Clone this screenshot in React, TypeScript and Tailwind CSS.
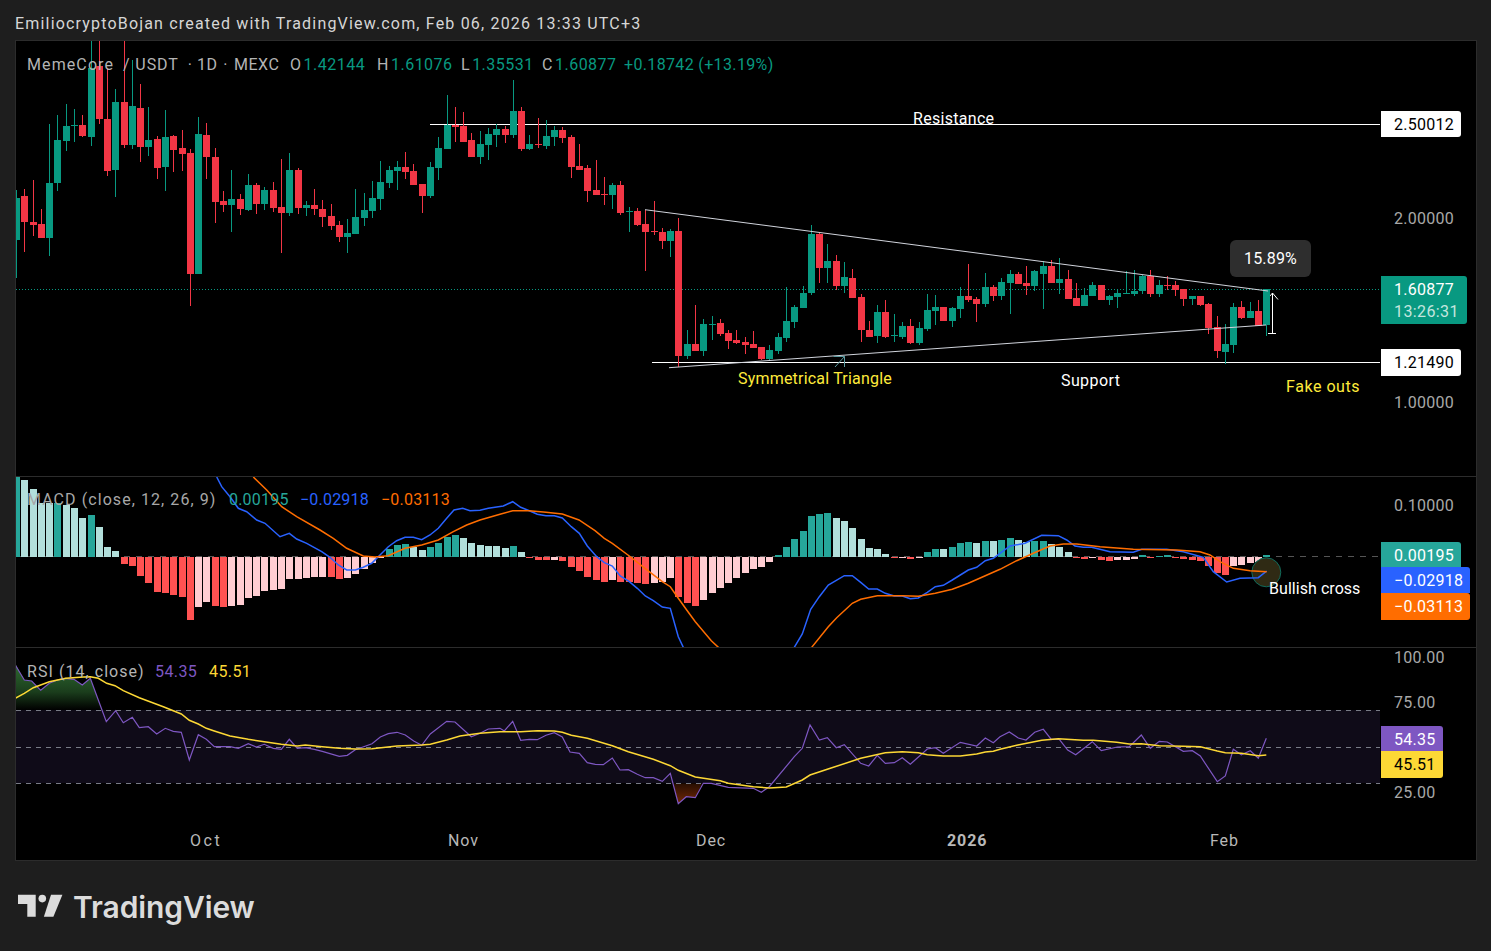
const C: number[][] = [
[1,190,198,240,278],[0,189,196,222,252],[0,180,222,225,236],[0,209,224,238,238],[1,124,183,238,256],[1,115,140,183,191],[1,104,126,141,151],[1,109,125,126,142],[0,115,125,136,137],[1,41,68,137,146],
[0,41,66,119,124],[0,68,119,171,176],[1,89,102,170,197],[0,41,102,145,148],[1,60,106,145,149],[0,84,108,147,162],[1,107,140,147,156],[0,136,139,168,179],[1,110,137,167,191],[0,135,136,150,172],
[0,130,148,154,171],[0,149,153,274,306],[1,117,134,274,274],[0,123,135,157,179],[0,148,157,202,223],[0,191,201,205,212],[1,170,199,205,232],[0,194,199,209,215],[1,174,185,210,211],[0,183,185,204,214],
[1,187,190,204,210],[0,182,190,208,212],[0,159,207,213,253],[1,153,170,213,216],[0,168,170,208,214],[1,201,205,208,216],[0,189,205,209,215],[0,200,209,217,227],[0,204,216,226,230],[0,221,225,237,242],
[1,219,233,237,253],[1,189,217,234,234],[1,193,210,218,226],[1,181,198,211,218],[1,161,182,199,210],[1,166,170,183,188],[1,161,167,171,190],[0,152,167,172,179],[0,164,171,185,185],[0,184,184,196,213],
[1,162,167,196,198],[1,137,148,168,180],[1,95,125,149,149],[0,107,125,127,142],[0,112,126,142,142],[0,133,140,157,157],[1,131,144,157,164],[1,128,134,145,160],[1,124,129,135,147],[0,126,129,135,143],
[1,80,111,135,138],[0,107,111,149,151],[1,135,144,149,150],[0,118,144,145,148],[1,120,136,146,149],[1,126,130,137,146],[0,127,130,138,143],[0,135,137,167,178],[0,144,166,170,170],[0,165,168,191,202],
[0,160,190,195,195],[0,177,194,195,205],[1,183,185,195,209],[0,181,185,213,215],[1,207,211,212,232],[0,208,211,225,226],[0,210,224,232,271],[0,201,231,232,235],[0,228,232,241,249],[1,229,231,241,257],
[0,218,231,356,367],[1,330,344,356,359],[0,305,344,351,351],[1,319,324,351,356],[1,316,324,325,340],[0,319,323,334,336],[0,330,333,341,349],[0,330,340,343,344],[0,337,342,345,354],[0,331,344,348,348],
[0,347,347,359,360],[1,345,350,359,360],[1,333,337,351,354],[1,287,321,338,342],[1,305,307,322,328],[1,286,293,308,308],[1,225,234,293,295],[0,233,234,268,283],[1,244,261,268,283],[0,255,261,286,290],
[1,262,277,286,293],[0,269,278,298,298],[0,294,297,330,342],[0,321,330,337,337],[1,305,312,336,343],[0,300,312,337,338],[1,314,335,336,342],[1,322,326,337,339],[0,319,326,343,344],[1,322,328,343,345],
[1,294,310,329,331],[1,295,307,311,325],[0,307,307,321,321],[1,307,308,321,327],[1,287,296,309,318],[0,264,296,300,302],[0,297,299,304,322],[1,273,287,304,307],[0,285,287,296,301],[1,278,282,296,300],
[1,270,274,283,314],[0,272,274,284,284],[0,266,283,286,295],[1,270,271,286,291],[1,261,266,274,309],[0,260,266,283,283],[1,258,279,283,294],[0,270,279,299,299],[0,283,298,306,306],[1,288,295,306,306],
[1,282,285,296,296],[0,285,285,300,300],[1,295,296,300,305],[1,290,293,297,308],[1,271,293,294,294],[1,270,291,294,296],[1,275,276,291,294],[0,270,276,294,297],[1,280,285,294,297],[0,276,285,286,290],
[0,281,285,290,296],[0,289,289,299,306],[1,296,296,299,305],[0,296,296,305,306],[0,303,304,328,334],[0,316,327,351,358],[1,324,344,352,364],[1,303,307,345,353],[0,301,307,318,319],[1,302,311,318,318],
[0,300,311,326,326],[1,289,289,325,336],
];
const H: [number, number][] = [
[0,21],[1,30],[1,57],[1,100],[1,100],[0,100],[1,105],[1,114],[1,144],[0,135],[1,171],[1,231],[1,243],[2,282],[2,288],[2,318],[2,339],[2,366],[2,369],[2,375],
[2,381],[2,450],[3,411],[3,396],[2,408],[2,411],[3,408],[3,405],[3,384],[3,378],[3,363],[3,360],[3,357],[3,327],[3,327],[3,324],[3,321],[3,321],[2,321],[2,327],
[3,324],[3,312],[3,297],[3,279],[3,264],[0,237],[0,225],[0,222],[1,231],[1,240],[0,231],[0,219],[0,201],[0,195],[1,204],[1,219],[1,225],[1,228],[1,228],[1,234],
[0,228],[1,246],[2,261],[2,270],[2,270],[3,270],[2,273],[2,291],[2,303],[2,321],[2,330],[2,336],[3,330],[2,336],[2,336],[2,339],[2,342],[3,339],[3,336],[3,324],
[2,381],[2,399],[2,408],[3,390],[3,369],[3,354],[3,339],[3,324],[3,309],[3,297],[3,291],[3,276],[0,255],[0,231],[0,207],[0,183],[0,138],[0,132],[0,129],[1,144],
[1,153],[1,174],[1,207],[1,234],[1,237],[1,252],[2,264],[3,261],[2,267],[3,264],[0,246],[0,237],[1,237],[0,231],[0,219],[0,216],[1,219],[0,213],[1,213],[0,210],
[0,204],[1,210],[1,216],[0,213],[0,213],[1,222],[1,231],[1,246],[2,264],[2,267],[3,264],[2,270],[2,273],[3,270],[3,270],[3,267],[0,255],[2,262],[0,257],[0,256],
[2,262],[2,267],[2,270],[2,273],[2,288],[2,309],[2,315],[3,288],[3,285],[3,279],[3,276],[0,255],
];
const HC = ["#26a69a", "#b2dfdb", "#ff5252", "#ffcdd2"];
const cx = (i: number) => Math.round(16 + 8.28 * i);
const conv = (ox: number, oy: number, p: number[]) => {
  const out: string[] = [];
  for (let i = 0; i < p.length; i += 2) out.push(`${(ox + p[i] / 3).toFixed(1)},${(oy + p[i + 1] / 3).toFixed(1)}`);
  return out;
};
const blue1 = [...conv(0,470,[650,21,665,50,690,80,715,115,740,125,770,150,795,160,840,200,868,190,890,207,920,220,965,245,990,262,1015,285,1040,300,1066,300,1090,292,1115,280,1140,255,1165,230,1190,212,1215,202,1240,202,1265,209,1290,195,1315,175,1340,145,1362,120,1388,115,1410,122,1440,121,1465,115]),
 ...conv(500,470,[10,108,38,95,62,112,88,122,112,133,138,137,163,137,187,144,214,170,238,190,262,228,290,260,313,278,337,288,361,318,388,335,412,355,436,378,460,392,487,411,511,415,535,500,550,532,560,560,873,560,883,532,907,492,932,418,958,380,985,345,1033,317,1057,317,1082,337,1106,357,1132,357,1156,370,1183,378,1207,378,1231,386,1255,384,1282,367,1306,350,1330,346,1357,330,1381,315,1405,300,1430,292,1456,272,1480,265]),
 ...conv(1000,470,[0,250,30,228,75,220,125,196,175,197,200,210,225,228,250,232,275,232,330,245,400,247,425,238,500,238,550,245,610,262,640,305,680,336,720,325,775,323,800,303])].join(" ");
const orange1 = [...conv(0,470,[760,21,800,60,845,110,890,140,960,180,1000,205,1040,235,1090,258,1125,261,1165,257,1215,235,1265,225,1315,210,1360,185,1400,165,1440,150]),
 ...conv(500,470,[0,133,38,122,88,122,138,127,187,132,237,150,285,182,313,205,337,220,388,258,436,296,487,335,511,350,535,385,560,420,586,455,634,512,655,532,670,560,925,560,935,532,985,470,1010,443,1057,400,1082,388,1132,377,1207,377,1255,379,1306,370,1357,358,1405,340,1456,317]),
 ...conv(1000,470,[0,298,50,272,100,250,150,228,190,222,230,222,300,230,400,238,530,240,600,245,630,255,660,275,700,295,750,302,800,305])].join(" ");
const purple1 = [...conv(0,650,[46,45,73,90,95,93,122,121,148,100,172,90,197,85,222,88,247,105,271,85,295,150,319,215,347,182,370,218,397,202,418,233,445,230,470,252,496,235,520,244,544,247,568,330,595,254,619,268,643,290,690,290,715,295,745,281,769,291,793,283,820,295,844,298,868,268,892,295,916,293,943,298,967,304,1018,319,1042,316,1066,299,1116,281,1141,261,1165,251,1191,247,1216,255,1241,273,1265,286,1291,252,1340,214,1365,216,1414,260,1440,250,1465,237]),
 ...conv(500,650,[0,235,13,243,38,214,62,271,88,268,112,269,138,256,163,248,187,261,210,306,238,310,262,338,286,343,310,344,337,324,360,360,385,359,412,373,436,383,460,383,487,394,511,370,535,461,559,440,586,443,610,400,634,400,685,412,760,415,784,427,808,410,883,320,907,295,930,225,958,270,982,263,1009,293,1033,284,1082,340,1106,348,1132,316,1156,340,1183,338,1207,323,1231,343,1282,297,1306,293,1330,310,1381,277,1430,288,1456,264,1480,278]),
 ...conv(1000,650,[0,260,28,246,55,264,78,270,104,247,130,238,154,268,178,268,203,300,227,314,277,275,304,302,352,291,388,290,424,255,451,295,478,274,502,276,550,304,577,302,601,318,652,395,676,378,700,298,724,314,751,302,775,325,799,265])].join(" ");
const yellow1 = [...conv(0,650,[46,145,73,130,100,113,148,95,197,85,250,81,271,80,295,85,320,100,345,107,370,122,418,143,490,170,544,192,568,211,595,222,619,235,643,243,690,258,745,268,793,275,844,283,892,288,916,285,967,290,1018,295,1066,297,1116,296,1191,288,1265,285,1291,283,1340,270,1380,258,1440,250]),
 ...conv(500,650,[0,245,62,245,112,242,163,243,187,247,214,256,262,265,337,287,385,305,460,328,511,347,535,361,586,381,661,392,685,400,760,410,808,414,859,411,907,390,930,375,982,358,1082,325,1156,308,1207,305,1255,308,1282,314,1330,318,1381,318,1430,312,1456,306,1480,304]),
 ...conv(1000,650,[0,298,50,286,125,271,175,266,250,271,280,271,350,277,388,282,424,281,478,287,550,289,601,290,652,303,676,308,724,310,775,317,799,315])].join(" ");
const greenFill = "16,665 24.3,680 31.7,681 40.7,690.3 49.3,683.3 57.3,680 65.7,678.3 74,679.3 82.3,685 90.3,678.3 98.3,700 102,710 16,710";
const brownFill = "673,783.5 678.3,803.7 686.3,796.7 695.3,797.7 702,783.5";

function PriceTag({ cls, children }: { cls: string; children: React.ReactNode }) {
  return <div className={"absolute left-px pl-[13px] text-[16px] leading-[28px] tracking-[0.25px] " + cls}>{children}</div>;
}

export default function App() {
  return (
    <div className="w-[1491px] h-[951px] overflow-hidden bg-[#1e1e1e] flex flex-col [font-family:'Roboto',sans-serif]">
      <div className="h-10 pl-[15px] pt-[14px] text-[16px] leading-5 tracking-[1.18px] text-[#d6d6d6] whitespace-nowrap">
        EmiliocryptoBojan created with TradingView.com, Feb 06, 2026 13:33 UTC+3
      </div>
      <div className="ml-[15px] w-[1462px] h-[821px] border border-[#2c2c2c] bg-black flex flex-col">
        {/* Price pane */}
        <div className="h-[435px] flex">
          <div className="relative w-[1364px] h-full">
            <svg viewBox="16 41 1364 435" width="1364" height="435" className="block" shapeRendering="crispEdges">
              <line x1="16" x2="1380" y1="289.5" y2="289.5" stroke="#089981" strokeDasharray="1 2" />
              <line x1="430" x2="1380" y1="124.5" y2="124.5" stroke="#ffffff" />
              <line x1="652" x2="1380" y1="362.5" y2="362.5" stroke="#ffffff" />
              <path d="M1272.5 293V333M1268 333.5H1276M1272.5 293L1278 299.5M1272.5 293L1267 299.5" stroke="#ffffff" strokeWidth="1" fill="none" shapeRendering="geometricPrecision" />
              {C.map((c, i) => {
                const col = c[0] ? "#089981" : "#f23645";
                const x = cx(i);
                return (
                  <g key={i} fill={col}>
                    <rect x={x} y={c[1]} width="1" height={c[4] - c[1]} />
                    <rect x={x - 3} y={c[2]} width="7" height={Math.max(1, c[3] - c[2])} />
                  </g>
                );
              })}
              <g shapeRendering="geometricPrecision" fill="none">
                <line x1="645" y1="209.7" x2="1268" y2="291" stroke="#d1d4dc" strokeWidth="1" />
                <line x1="669" y1="367.7" x2="1266" y2="325" stroke="#d1d4dc" strokeWidth="1" />
                <path d="M833.5 356.5H844.5V367M844.5 356.5L835 367" stroke="#5b9aa0" strokeWidth="1" />
              </g>
            </svg>
            <div className="absolute left-[11px] top-[14px] h-5 flex text-[16px] leading-5 tracking-[0.5px] text-[#b4b4b4] whitespace-nowrap">
              <span className="w-[96px] tracking-[1.1px]">MemeCore</span>
              <span className="w-[60px] tracking-[0.9px]">/ USDT</span>
              <span className="w-[14px] text-center">·</span>
              <span className="w-[20px]">1D</span>
              <span className="w-[17px] text-center">·</span>
              <span className="w-[56px]">MEXC</span>
              <span className="w-[87px]"><span className="mr-[2px]">O</span><span className="text-[#089981]">1.42144</span></span>
              <span className="w-[84px]"><span className="mr-[2px]">H</span><span className="text-[#089981]">1.61076</span></span>
              <span className="w-[81px]"><span className="mr-[2px]">L</span><span className="text-[#089981]">1.35531</span></span>
              <span className="w-[82px]"><span className="mr-[2px]">C</span><span className="text-[#089981]">1.60877</span></span>
              <span className="text-[#089981] tracking-[0.35px]">+0.18742 (+13.19%)</span>
            </div>
            <div className="absolute left-[897px] top-[68px] text-[16px] leading-5 tracking-[0.3px] text-white">Resistance</div>
            <div className="absolute left-[722px] top-[328px] text-[16px] leading-5 tracking-[0.2px] text-[#ffeb3b] whitespace-nowrap">Symmetrical Triangle</div>
            <div className="absolute left-[1045px] top-[330px] text-[16px] leading-5 tracking-[0.4px] text-white">Support</div>
            <div className="absolute left-[1270px] top-[336px] text-[16px] leading-5 tracking-[0.55px] text-[#ffeb3b] whitespace-nowrap">Fake outs</div>
            <div className="absolute left-[1214px] top-[199px] w-[81px] h-[37px] pt-px rounded-[6px] bg-[#2e2e2e] flex items-center justify-center text-[16px] tracking-[0.2px] text-white">15.89%</div>
          </div>
          <div className="relative w-[95px] h-full text-[#a8a8a8]">
            <div className="absolute left-[14px] top-[168px] text-[16px] leading-5 tracking-[0.25px]">2.00000</div>
            <div className="absolute left-[14px] top-[352px] text-[16px] leading-5 tracking-[0.25px]">1.00000</div>
            <PriceTag cls="top-[70px] w-[80px] h-[26px] bg-white text-black rounded-r-[3px]">2.50012</PriceTag>
            <div className="absolute left-px top-[235px] w-[86px] h-[48px] pl-[13px] pt-[3px] rounded-r-[3px] bg-[#089981] text-[16px] leading-[22px] tracking-[0.25px] text-white">
              <div>1.60877</div>
              <div className="text-[#c4e6df] tracking-[0.4px]">13:26:31</div>
            </div>
            <PriceTag cls="top-[308px] w-[80px] h-[27px] bg-white text-black rounded-r-[3px]">1.21490</PriceTag>
          </div>
        </div>
        <div className="h-px bg-[#2c2c2c]" />
        {/* MACD pane */}
        <div className="h-[170px] flex">
          <div className="relative w-[1364px] h-full">
            <svg viewBox="16 477 1364 170" width="1364" height="170" className="block">
              <line x1="16" x2="1380" y1="556.5" y2="556.5" stroke="#555" strokeDasharray="6 6" />
              {H.map(([k, z], i) => {
                const y = 470 + z / 3;
                const t = Math.round(Math.min(y, 556.5));
                const b = Math.round(Math.max(y, 556.5));
                return <rect key={i} x={cx(i) - 3} y={t} width="7" height={Math.max(1, b - t)} fill={HC[k]} shapeRendering="crispEdges" />;
              })}
              <circle cx="1266.3" cy="572.3" r="14.5" fill="#2f2a14" stroke="#0f6b5c" strokeWidth="1" />
              <polyline points={blue1} fill="none" stroke="#2962ff" strokeWidth="1.5" />
              <polyline points={orange1} fill="none" stroke="#ff6d00" strokeWidth="1.5" />
            </svg>
            <div className="absolute left-[11px] top-[13px] h-5 flex text-[16px] leading-5 tracking-[0.2px] text-[#a8a8a8] whitespace-nowrap">
              <span className="w-[202px] tracking-[1.07px]">MACD (close, 12, 26, 9)</span>
              <span className="w-[71px] text-[#26a69a]">0.00195</span>
              <span className="w-[81px] text-[#2962ff]">−0.02918</span>
              <span className="text-[#ff6d00]">−0.03113</span>
            </div>
            <div className="absolute left-[1253px] top-[102px] text-[16px] leading-5 tracking-[0.05px] text-white whitespace-nowrap">Bullish cross</div>
          </div>
          <div className="relative w-[95px] h-full text-[#a8a8a8]">
            <div className="absolute left-[14px] top-[19px] text-[16px] leading-5 tracking-[0.25px]">0.10000</div>
            <PriceTag cls="top-[65px] w-[80px] h-[25px] bg-[#26a69a] text-white rounded-tr-[3px]">0.00195</PriceTag>
            <PriceTag cls="top-[90px] w-[89px] h-[26px] bg-[#2962ff] text-white rounded-tr-[3px]">−0.02918</PriceTag>
            <PriceTag cls="top-[116px] w-[89px] h-[27px] bg-[#ff6d00] text-white rounded-r-[3px]">−0.03113</PriceTag>
          </div>
        </div>
        <div className="h-px bg-[#2c2c2c]" />
        {/* RSI pane */}
        <div className="h-[177px] flex">
          <div className="relative w-[1364px] h-full">
            <svg viewBox="16 648 1364 177" width="1364" height="177" className="block">
              <defs>
                <linearGradient id="gf" gradientUnits="userSpaceOnUse" x1="0" x2="0" y1="665" y2="710">
                  <stop offset="0" stopColor="#4caf50" stopOpacity="0.6" />
                  <stop offset="0.6" stopColor="#4caf50" stopOpacity="0.35" />
                  <stop offset="1" stopColor="#4caf50" stopOpacity="0" />
                </linearGradient>
                <linearGradient id="bf" gradientUnits="userSpaceOnUse" x1="0" x2="0" y1="783" y2="804">
                  <stop offset="0" stopColor="#ff5a0a" stopOpacity="0.15" />
                  <stop offset="1" stopColor="#ff5a0a" stopOpacity="0.45" />
                </linearGradient>
              </defs>
              <rect x="16" y="710" width="1364" height="73" fill="#0f0b18" shapeRendering="crispEdges" />
              <polygon points={greenFill} fill="url(#gf)" />
              <polygon points={brownFill} fill="url(#bf)" />
              <g stroke="#787b86" strokeDasharray="5 5" shapeRendering="crispEdges">
                <line x1="16" x2="1380" y1="710.5" y2="710.5" />
                <line x1="16" x2="1380" y1="747.5" y2="747.5" />
                <line x1="16" x2="1380" y1="783.5" y2="783.5" />
              </g>
              <polyline points={purple1} fill="none" stroke="#7e57c2" strokeWidth="1.2" />
              <polyline points={yellow1} fill="none" stroke="#fdd835" strokeWidth="1.5" />
            </svg>
            <div className="absolute left-[11px] top-[14px] h-5 flex text-[16px] leading-5 tracking-[0.4px] text-[#b4b4b4] whitespace-nowrap">
              <span className="w-[128px] tracking-[1.05px]">RSI (14, close)</span>
              <span className="w-[54px] text-[#7e57c2]">54.35</span>
              <span className="text-[#fdd835]">45.51</span>
            </div>
          </div>
          <div className="relative w-[95px] h-full text-[#a8a8a8]">
            <div className="absolute left-[14px] top-0 text-[16px] leading-5 tracking-[0.25px]">100.00</div>
            <div className="absolute left-[14px] top-[45px] text-[16px] leading-5 tracking-[0.25px]">75.00</div>
            <div className="absolute left-[14px] top-[135px] text-[16px] leading-5 tracking-[0.25px]">25.00</div>
            <PriceTag cls="top-[78px] w-[62px] h-[25px] bg-[#7e57c2] text-white rounded-tr-[3px]">54.35</PriceTag>
            <PriceTag cls="top-[103px] w-[62px] h-[27px] bg-[#fdd835] text-black rounded-br-[3px]">45.51</PriceTag>
          </div>
        </div>
        {/* Time axis */}
        <div className="relative h-[35px] text-[16px] leading-5 tracking-[0.9px] text-[#b8b8b8]">
          <span className="absolute left-[174px] top-[6px] tracking-[2.6px]">Oct</span>
          <span className="absolute left-[432px] top-[6px]">Nov</span>
          <span className="absolute left-[680px] top-[6px]">Dec</span>
          <span className="absolute left-[931px] top-[6px] font-bold">2026</span>
          <span className="absolute left-[1194px] top-[6px]">Feb</span>
        </div>
      </div>
      <div className="ml-[18px] mt-[31px] flex items-center h-[26px]">
        <svg width="45" height="23" viewBox="18 894 45 23" className="block">
          <path d="M18 894.7H35.7V916.7H27.3V904H18Z" fill="#dcdcdc" />
          <circle cx="42.3" cy="898.6" r="3.8" fill="#dcdcdc" />
          <path d="M51 894.7H62.4L53.4 916.7H43.9Z" fill="#dcdcdc" />
        </svg>
        <span className="ml-[10px] pt-[3px] text-[30px] leading-none font-semibold tracking-[-0.1px] text-[#dcdcdc] [font-family:'Inter',sans-serif]">TradingView</span>
      </div>
    </div>
  );
}
